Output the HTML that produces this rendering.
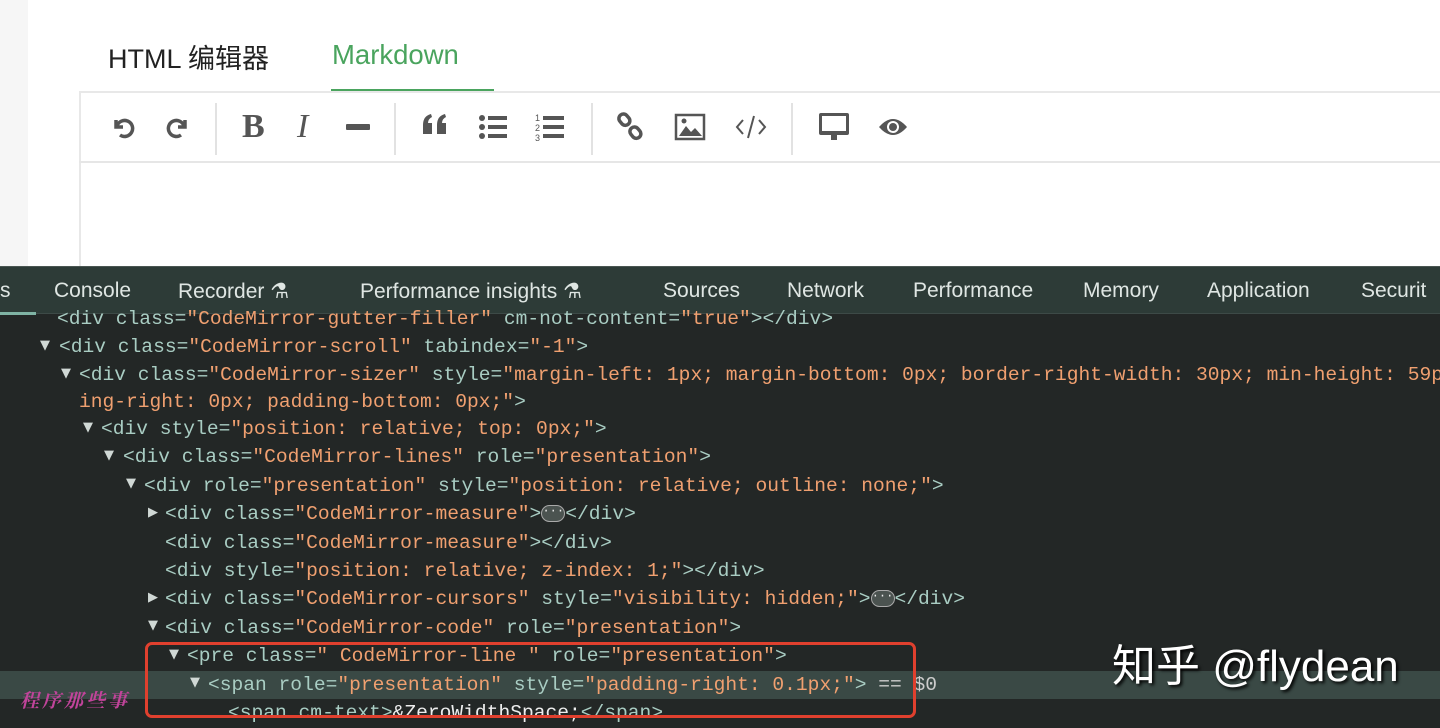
<!DOCTYPE html>
<html><head><meta charset="utf-8"><style>
*{margin:0;padding:0;box-sizing:border-box}
html,body{width:1440px;height:728px;overflow:hidden}
body{background:#fff;position:relative;font-family:"Liberation Sans","Noto Sans CJK SC",sans-serif}
.strip{position:absolute;left:0;top:0;width:28px;height:266px;background:#f6f6f6}
.tab{position:absolute;top:37px;font-size:27px;color:#222}
.editor{position:absolute;left:79px;top:91px;width:1361px;height:180px;border:2px solid #e8e8e8;border-right:none}
.tb{position:absolute;left:79px;top:161px;width:1361px;height:2px;background:#e6e6e6}
.ic{position:absolute;top:111px;width:32px;height:32px}
.sep{position:absolute;top:103px;width:2px;height:52px;background:#e2e2e2}
.dev{position:absolute;left:0;top:266px;width:1440px;height:462px;background:#232726}
.bar{position:absolute;left:0;top:266px;width:1440px;height:48px;background:#2d3b37;border-top:1px solid #4a5652;border-bottom:1px solid #3d4a47;overflow:hidden}
.bar span{position:absolute;top:12px;font-size:21px;color:#dfe6e3;white-space:nowrap}
.ln{position:absolute;height:28px;line-height:28px;font-family:"Liberation Mono",monospace;font-size:19.6px;white-space:pre;color:#a9cdc3}
.v{color:#f0a070}
.tri{position:absolute;font-size:13px;color:#d0d8d5;font-family:"DejaVu Sans",sans-serif}
.dots{display:inline-block;width:24px;height:17px;border:1.5px solid #aaa;border-radius:9px;background:#4b5350;color:#eee;font-size:12px;line-height:11px;text-align:center;vertical-align:middle}
</style></head><body>
<div class="strip"></div>
<div class="tab" style="left:108px">HTML 编辑器</div>
<div class="tab" style="left:332px;top:39px;font-size:27.5px;color:#4aa45e">Markdown</div>
<div style="position:absolute;left:331px;top:89px;width:163px;height:2px;background:#4aa45e"></div>
<div class="editor"></div><div class="tb"></div>
<svg class="ic" style="left:107px" viewBox="0 0 32 32"><path d="M9 9v7h7M10 15a8 8 0 1 1 3 9" fill="none" stroke="#555" stroke-width="3.5"/></svg>
<svg class="ic" style="left:162px" viewBox="0 0 32 32"><path d="M23 9v7h-7M22 15a8 8 0 1 0 -3 9" fill="none" stroke="#555" stroke-width="3.5"/></svg>
<div class="sep" style="left:215px"></div>
<div class="ic" style="left:242px;top:108px;font:bold 34px 'Liberation Serif',serif;color:#555">B</div>
<div class="ic" style="left:297px;top:108px;font:italic 34px 'Liberation Serif',serif;color:#555">I</div>
<div style="position:absolute;left:346px;top:124px;width:24px;height:6px;background:#555;border-radius:1px"></div>
<div class="sep" style="left:394px"></div>
<svg class="ic" style="left:420px" viewBox="0 0 32 32" fill="#555"><path d="M3 14q0-9 8-11l1 3q-4 2-4 6h4v11H3zM17 14q0-9 8-11l1 3q-4 2-4 6h4v11h-9z"/></svg>
<svg class="ic" style="left:477px" viewBox="0 0 32 32" fill="#555"><circle cx="5" cy="7" r="3"/><circle cx="5" cy="16" r="3"/><circle cx="5" cy="25" r="3"/><rect x="11" y="5" width="19" height="4"/><rect x="11" y="14" width="19" height="4"/><rect x="11" y="23" width="19" height="4"/></svg>
<svg class="ic" style="left:534px" viewBox="0 0 32 32" fill="#555"><text x="1" y="10" font-size="9" font-family="Liberation Sans">1</text><text x="1" y="20" font-size="9" font-family="Liberation Sans">2</text><text x="1" y="30" font-size="9" font-family="Liberation Sans">3</text><rect x="9" y="5" width="21" height="4"/><rect x="9" y="14" width="21" height="4"/><rect x="9" y="23" width="21" height="4"/></svg>
<div class="sep" style="left:591px"></div>
<svg class="ic" style="left:615px" viewBox="0 0 32 32" fill="none" stroke="#555" stroke-width="3.5"><rect x="5" y="3" width="9" height="12" rx="4.5" transform="rotate(-40 9 9)"/><rect x="16" y="16" width="9" height="12" rx="4.5" transform="rotate(-40 20 22)"/></svg>
<svg class="ic" style="left:674px" viewBox="0 0 32 32"><rect x="2" y="4" width="28" height="24" fill="none" stroke="#555" stroke-width="2.5"/><path d="M5 25l7-10 5 6 4-4 7 8z" fill="#555"/><circle cx="10" cy="10" r="2.5" fill="#555"/></svg>
<svg class="ic" style="left:735px" viewBox="0 0 32 32" fill="none" stroke="#555" stroke-width="2"><path d="M8 9l-6 7 6 7M24 9l6 7-6 7M19 5l-6 22"/></svg>
<div class="sep" style="left:791px"></div>
<svg class="ic" style="left:818px" viewBox="0 0 32 32" fill="#555"><rect x="1" y="2" width="30" height="22" rx="2"/><rect x="4" y="5" width="24" height="15" fill="#fff"/><rect x="13" y="24" width="6" height="5"/></svg>
<svg class="ic" style="left:877px" viewBox="0 0 32 32"><path d="M2 16q14-16 28 0q-14 16-28 0z" fill="#555"/><circle cx="16" cy="16" r="6" fill="#fff"/><circle cx="16" cy="16" r="4" fill="#555"/></svg>
<div class="dev"></div>
<div class="bar"><span style="left:0">s</span><span style="left:54px">Console</span><span style="left:178px">Recorder ⚗</span><span style="left:360px">Performance insights ⚗</span><span style="left:663px">Sources</span><span style="left:787px">Network</span><span style="left:913px">Performance</span><span style="left:1083px">Memory</span><span style="left:1207px">Application</span><span style="left:1361px">Securit</span></div>
<div style="position:absolute;left:0;top:312px;width:36px;height:3px;background:#7fb3a4"></div>
<div style="position:absolute;left:0;top:671px;width:1440px;height:28px;background:#3a4945"></div>
<div class="ln" style="left:57px;top:305px">&lt;div class=<span class="v">"CodeMirror-gutter-filler"</span> cm-not-content=<span class="v">"true"</span>&gt;&lt;/div&gt;</div>
<div class="tri" style="left:40px;top:338px">▼</div><div class="ln" style="left:59px;top:333px">&lt;div class=<span class="v">"CodeMirror-scroll"</span> tabindex=<span class="v">"-1"</span>&gt;</div>
<div class="tri" style="left:61px;top:366px">▼</div><div class="ln" style="left:79px;top:361px">&lt;div class=<span class="v">"CodeMirror-sizer"</span> style=<span class="v">"margin-left: 1px; margin-bottom: 0px; border-right-width: 30px; min-height: 59p</span></div>
<div class="ln" style="left:79px;top:388px"><span class="v">ing-right: 0px; padding-bottom: 0px;"</span>&gt;</div>
<div class="tri" style="left:83px;top:420px">▼</div><div class="ln" style="left:101px;top:415px">&lt;div style=<span class="v">"position: relative; top: 0px;"</span>&gt;</div>
<div class="tri" style="left:104px;top:448px">▼</div><div class="ln" style="left:123px;top:443px">&lt;div class=<span class="v">"CodeMirror-lines"</span> role=<span class="v">"presentation"</span>&gt;</div>
<div class="tri" style="left:126px;top:476px">▼</div><div class="ln" style="left:144px;top:472px">&lt;div role=<span class="v">"presentation"</span> style=<span class="v">"position: relative; outline: none;"</span>&gt;</div>
<div class="tri" style="left:148px;top:505px">▶</div><div class="ln" style="left:165px;top:500px">&lt;div class=<span class="v">"CodeMirror-measure"</span>&gt;<span class="dots">···</span>&lt;/div&gt;</div>
<div class="ln" style="left:165px;top:529px">&lt;div class=<span class="v">"CodeMirror-measure"</span>&gt;&lt;/div&gt;</div>
<div class="ln" style="left:165px;top:557px">&lt;div style=<span class="v">"position: relative; z-index: 1;"</span>&gt;&lt;/div&gt;</div>
<div class="tri" style="left:148px;top:590px">▶</div><div class="ln" style="left:165px;top:585px">&lt;div class=<span class="v">"CodeMirror-cursors"</span> style=<span class="v">"visibility: hidden;"</span>&gt;<span class="dots">···</span>&lt;/div&gt;</div>
<div class="tri" style="left:148px;top:618px">▼</div><div class="ln" style="left:165px;top:614px">&lt;div class=<span class="v">"CodeMirror-code"</span> role=<span class="v">"presentation"</span>&gt;</div>
<div class="tri" style="left:169px;top:647px">▼</div><div class="ln" style="left:187px;top:642px">&lt;pre class=<span class="v">" CodeMirror-line "</span> role=<span class="v">"presentation"</span>&gt;</div>
<div class="tri" style="left:190px;top:675px">▼</div><div class="ln" style="left:208px;top:671px">&lt;span role=<span class="v">"presentation"</span> style=<span class="v">"padding-right: 0.1px;"</span>&gt; <span style="color:#ccc">== $0</span></div>
<div class="ln" style="left:228px;top:699px">&lt;span cm-text&gt;<span style="color:#eee">&amp;ZeroWidthSpace;</span>&lt;/span&gt;</div>
<div style="position:absolute;left:145px;top:642px;width:771px;height:76px;border:3px solid #e0402e;border-radius:7px"></div>
<div style="position:absolute;left:20px;top:686px;font:italic bold 19px 'Noto Serif CJK SC',serif;letter-spacing:3px;color:#c0449a">程序那些事</div>
<div style="position:absolute;left:1112px;top:630px;font-size:44px;color:#fff;text-shadow:2px 2px 3px #000;font-family:'Liberation Sans','Noto Sans CJK SC',sans-serif">知乎 @flydean</div>
</body></html>
